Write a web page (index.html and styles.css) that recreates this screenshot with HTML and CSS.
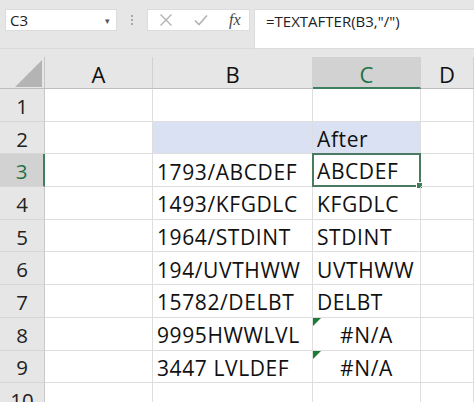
FILE: index.html
```
<!DOCTYPE html>
<html>
<head>
<meta charset="utf-8">
<link rel="stylesheet" href="styles.css">
</head>
<body>
<div class="toolbar">
  <div class="namebox"><span class="ref">C3</span><span class="drop">▾</span></div>
  <div class="grip"><i></i><i></i><i></i></div>
  <div class="fxbox">
    <svg class="ico" width="14" height="14" viewBox="0 0 14 14"><path d="M1.5 1.5 L12.5 12.5 M12.5 1.5 L1.5 12.5" stroke="#b3b3b3" stroke-width="1.4" fill="none"/></svg>
    <svg class="ico" width="14" height="14" viewBox="0 0 14 14"><path d="M1 7.5 L5 11.5 L13 2.5" stroke="#b3b3b3" stroke-width="1.6" fill="none"/></svg>
    <span class="fx">fx</span>
  </div>
  <div class="formula">=TEXTAFTER(B3,"/")</div>
</div>
<div class="gap"></div>
<div class="sheet">
  <div class="corner"><span class="tri"></span></div>
  <div class="colh">A</div>
  <div class="colh">B</div>
  <div class="colh sel">C</div>
  <div class="colh">D</div>

  <div class="rowh">1</div><div class="c"></div><div class="c"></div><div class="c"></div><div class="c"></div>
  <div class="rowh">2</div><div class="c"></div><div class="c blue"></div><div class="c blue">After</div><div class="c"></div>
  <div class="rowh sel">3</div><div class="c"></div><div class="c">1793/ABCDEF</div><div class="c active">ABCDEF<span class="handle"></span></div><div class="c"></div>
  <div class="rowh">4</div><div class="c"></div><div class="c">1493/KFGDLC</div><div class="c">KFGDLC</div><div class="c"></div>
  <div class="rowh">5</div><div class="c"></div><div class="c">1964/STDINT</div><div class="c">STDINT</div><div class="c"></div>
  <div class="rowh">6</div><div class="c"></div><div class="c">194/UVTHWW</div><div class="c">UVTHWW</div><div class="c"></div>
  <div class="rowh">7</div><div class="c"></div><div class="c">15782/DELBT</div><div class="c">DELBT</div><div class="c"></div>
  <div class="rowh">8</div><div class="c"></div><div class="c">9995HWWLVL</div><div class="c err"><span class="flag"></span>#N/A</div><div class="c"></div>
  <div class="rowh">9</div><div class="c"></div><div class="c">3447 LVLDEF</div><div class="c err"><span class="flag"></span>#N/A</div><div class="c"></div>
  <div class="rowh">10</div><div class="c"></div><div class="c"></div><div class="c"></div><div class="c"></div>
</div>
</body>
</html>
```
FILE: styles.css
```
html, body {
  margin: 0;
  padding: 0;
  width: 474px;
  height: 402px;
  overflow: hidden;
  background: #e6e6e6;
  font-family: "Open Sans", "Liberation Sans", sans-serif;
}
.toolbar {
  display: flex;
  align-items: flex-start;
  height: 49px;
  padding-top: 9px;
  box-sizing: border-box;
  border-bottom: 1px solid #dadada;
}
.namebox {
  margin-left: 5px;
  width: 112px;
  height: 22px;
  background: #fff;
  border: 1px solid #dcdcdc;
  box-sizing: border-box;
  display: flex;
  align-items: center;
  justify-content: space-between;
  padding: 0 6px 0 4px;
  font-size: 15px;
  color: #222;
}
.drop { font-size: 9px; color: #555; }
.grip {
  width: 30px;
  height: 22px;
  display: flex;
  flex-direction: column;
  align-items: center;
  justify-content: center;
  gap: 2px;
}
.grip i { display: block; width: 2px; height: 2px; background: #a8a8a8; }
.fxbox {
  width: 103px;
  height: 22px;
  background: #fff;
  border: 1px solid #dcdcdc;
  box-sizing: border-box;
  display: flex;
  align-items: center;
  padding-left: 11px;
  gap: 21px;
}
.fx {
  font-family: "Liberation Serif", serif;
  font-style: italic;
  font-size: 16px;
  color: #444;
}
.formula {
  margin-left: 4px;
  flex: 1;
  height: 40px;
  background: #fff;
  border: 1px solid #dcdcdc;
  border-right: none;
  box-sizing: border-box;
  padding: 1px 0 0 11px;
  font-size: 15px;
  color: #222;
}
.gap { height: 8px; }
.sheet {
  display: grid;
  grid-template-columns: 45px 108px 160px 108px 1fr;
  grid-template-rows: 32px;
  grid-auto-rows: 32.7px;
  background: #fff;
}
.corner {
  background: #e6e6e6;
  border-right: 1px solid #c8c8c8;
  border-bottom: 1px solid #bdbdbd;
  position: relative;
}
.tri {
  position: absolute;
  right: 2px;
  bottom: 1px;
  width: 0;
  height: 0;
  border-left: 27px solid transparent;
  border-bottom: 27px solid #b4b4b4;
}
.colh {
  background: #e6e6e6;
  border-right: 1px solid #d2d2d2;
  border-bottom: 1px solid #bdbdbd;
  display: flex;
  align-items: center;
  justify-content: center;
  font-size: 22px;
  color: #111;
  padding-top: 3px;
  box-sizing: border-box;
}
.colh.sel {
  background: #d2d2d2;
  color: #217346;
  border-bottom: 2px solid #3f7f5c;
}
.rowh {
  background: #e6e6e6;
  border-right: 1px solid #c8c8c8;
  border-bottom: 1px solid #d6d6d6;
  display: flex;
  align-items: center;
  justify-content: center;
  font-size: 20.5px;
  padding-top: 2px;
  color: #222;
  box-sizing: border-box;
}
.rowh.sel {
  background: #d2d2d2;
  color: #217346;
  border-right: 2px solid #3f7f5c;
}
.c {
  border-right: 1px solid #dedede;
  border-bottom: 1px solid #dedede;
  box-sizing: border-box;
  font-size: 21px;
  color: #111;
  padding-left: 4px;
  padding-top: 3px;
  display: flex;
  align-items: center;
  white-space: nowrap;
  overflow: visible;
  position: relative;
  letter-spacing: 0.6px;
}
.c.blue { background: #d9e1f2; }
.c.active {
  border: 2px solid #4a7a60;
  margin: -1px 0 0 -1px;
  padding-left: 3px;
  padding-top: 2px;
}
.handle {
  position: absolute;
  right: -4px;
  bottom: -4px;
  width: 5px;
  height: 5px;
  background: #3f7f5c;
  border: 1px solid #fff;
}
.c.err { justify-content: center; padding-left: 0; }
.flag {
  position: absolute;
  left: 0;
  top: 0;
  width: 0;
  height: 0;
  border-top: 8px solid #1e7b34;
  border-right: 8px solid transparent;
}
```
